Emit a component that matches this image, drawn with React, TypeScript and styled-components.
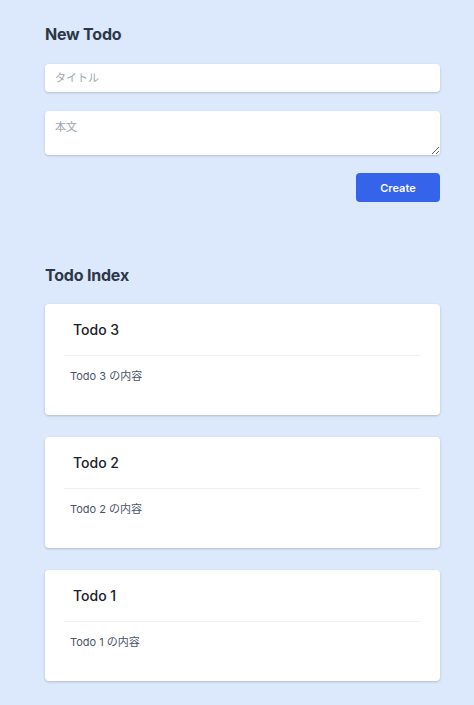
import React from "react";
import styled, { createGlobalStyle } from "styled-components";

const GlobalStyle = createGlobalStyle`
  html, body {
    margin: 0;
    padding: 0;
    background: #dce8fb;
  }
  body {
    font-family: Inter, "Noto Sans CJK JP", "Liberation Sans", sans-serif;
    color: #2d3748;
  }
  * {
    box-sizing: border-box;
  }
`;

const Page = styled.main`
  min-height: 705px;
  padding: 21px 34px 24px 45px;
  background: #dce8fb;
`;

const Section = styled.section<{ gap?: number }>`
  display: flex;
  flex-direction: column;
  margin-bottom: ${(p) => p.gap ?? 0}px;
`;

const Heading = styled.h2`
  margin: 0;
  font-size: 16px;
  line-height: 26px;
  font-weight: 700;
  letter-spacing: -0.2px;
  color: #2d3748;
`;

const Form = styled.form`
  display: flex;
  flex-direction: column;
  margin-top: 17px;
`;

const fieldCss = `
  width: 100%;
  border: none;
  border-radius: 4px;
  background: #ffffff;
  box-shadow: 0 1px 3px rgba(0, 0, 0, 0.12), 0 1px 2px rgba(0, 0, 0, 0.06);
  font-family: Inter, "Noto Sans CJK JP", "Liberation Sans", sans-serif;
  font-size: 11px;
  color: #2d3748;
  padding: 0 10px;
  outline: none;
  &::placeholder {
    color: #a0a6b0;
  }
`;

const TextInput = styled.input`
  ${fieldCss}
  height: 28px;
`;

const TextArea = styled.textarea`
  ${fieldCss}
  display: block;
  height: 44px;
  margin-top: 19px;
  padding-top: 7px;
  resize: vertical;
`;

const Actions = styled.div`
  display: flex;
  justify-content: flex-end;
  margin-top: 18px;
`;

const Button = styled.button`
  width: 84px;
  height: 29px;
  border: none;
  border-radius: 4px;
  background: #3563e9;
  color: #ffffff;
  font-family: Inter, "Liberation Sans", sans-serif;
  font-size: 11px;
  font-weight: 600;
  cursor: pointer;
`;

const List = styled.div`
  display: flex;
  flex-direction: column;
  gap: 22px;
  margin-top: 16px;
`;

const Card = styled.article`
  height: 111px;
  padding: 0 20px 0 19px;
  background: #ffffff;
  border-radius: 4px;
  box-shadow: 0 1px 3px rgba(0, 0, 0, 0.14), 0 1px 2px rgba(0, 0, 0, 0.06);
`;

const CardHeader = styled.div`
  padding: 16px 9px 15px;
  border-bottom: 1px solid #eef0f3;
`;

const CardTitle = styled.h3`
  margin: 0;
  font-size: 14px;
  line-height: 20px;
  font-weight: 500;
  color: #1a202c;
`;

const CardBody = styled.p`
  margin: 0;
  padding: 12px 6px;
  font-size: 11px;
  line-height: 16px;
  color: #4a5568;
`;

const todos = [
  { id: 3, title: "Todo 3", body: "Todo 3 の内容" },
  { id: 2, title: "Todo 2", body: "Todo 2 の内容" },
  { id: 1, title: "Todo 1", body: "Todo 1 の内容" },
];

const App = () => {
  return (
    <>
      <GlobalStyle />
      <Page>
        <Section gap={60}>
          <Heading>New Todo</Heading>
          <Form onSubmit={(e) => e.preventDefault()}>
            <TextInput placeholder="タイトル" />
            <TextArea placeholder="本文" />
            <Actions>
              <Button type="submit">Create</Button>
            </Actions>
          </Form>
        </Section>
        <Section>
          <Heading>Todo Index</Heading>
          <List>
            {todos.map((todo) => (
              <Card key={todo.id}>
                <CardHeader>
                  <CardTitle>{todo.title}</CardTitle>
                </CardHeader>
                <CardBody>{todo.body}</CardBody>
              </Card>
            ))}
          </List>
        </Section>
      </Page>
    </>
  );
};

export default App;
